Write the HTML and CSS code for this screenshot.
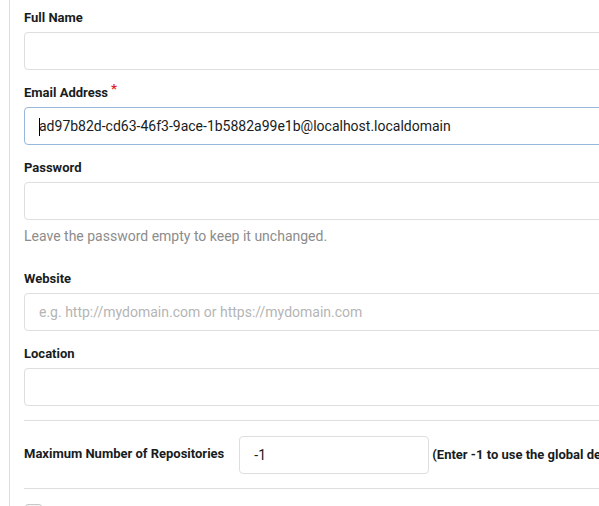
FILE: index.html
```html
<!DOCTYPE html>
<html>
<head>
<meta charset="utf-8">
<link rel="stylesheet" href="styles.css">
</head>
<body>
<div class="panel">
  <form class="form">
    <div class="field">
      <label class="label">Full Name</label>
      <div class="input"></div>
    </div>
    <div class="field">
      <label class="label">Email Address<span class="req">*</span></label>
      <div class="input focus"><span class="caret"></span>ad97b82d-cd63-46f3-9ace-1b5882a99e1b@localhost.localdomain</div>
    </div>
    <div class="field field-help">
      <label class="label">Password</label>
      <div class="input"></div>
      <div class="help">Leave the password empty to keep it unchanged.</div>
    </div>
    <div class="field">
      <label class="label">Website</label>
      <div class="input placeholder">e.g. http://mydomain.com or https://mydomain.com</div>
    </div>
    <div class="field">
      <label class="label">Location</label>
      <div class="input"></div>
    </div>
    <div class="divider"></div>
    <div class="inline-field">
      <label class="label inline-label">Maximum Number of Repositories</label>
      <div class="input small">-1</div>
      <span class="note">(Enter -1 to use the global default limit.)</span>
    </div>
    <div class="divider"></div>
    <div class="check-row">
      <span class="checkbox"></span>
    </div>
  </form>
</div>
</body>
</html>
```
FILE: styles.css
```css
html, body {
  margin: 0;
  padding: 0;
  background: #fff;
  overflow: hidden;
  width: 599px;
  height: 506px;
}
body {
  font-family: Roboto, "Liberation Sans", sans-serif;
  color: #181c21;
}
.panel {
  margin-left: 9px;
  border-left: 1px solid #dedede;
  width: 900px;
  min-height: 506px;
  padding: 9px 0 0 14px;
  box-sizing: border-box;
}
.form {
  width: 760px;
}
.field {
  margin-bottom: 14px;
}
.label {
  display: block;
  font-size: 13px;
  font-weight: 700;
  line-height: 18px;
  margin-bottom: 5px;
  color: #181c21;
}
.req {
  color: #db2828;
  margin-left: 3px;
  position: relative;
  top: -4px;
  font-size: 13px;
}
.input {
  position: relative;
  box-sizing: border-box;
  height: 38px;
  border: 1px solid #dedede;
  border-radius: 4px;
  padding: 0 14px;
  font-size: 14px;
  line-height: 36px;
  color: #181c21;
  white-space: nowrap;
  overflow: hidden;
}
.input.focus {
  border-color: #96b8dc;
}
.caret {
  position: absolute;
  left: 14px;
  top: 10px;
  width: 1px;
  height: 18px;
  background: #000;
}
.placeholder {
  color: #b5b5b5;
}
.field-help {
  margin-bottom: 24px;
}
.help {
  margin-top: 6px;
  font-size: 14px;
  line-height: 20px;
  color: #8c8c8c;
}
.divider {
  height: 1px;
  background: #dedede;
  margin: 0 0 15px 0;
}
.inline-field {
  display: flex;
  align-items: center;
  margin-bottom: 14px;
}
.inline-label {
  margin: 0 15px 3px 0;
}
.input.small {
  width: 190px;
  flex: none;
}
.note {
  font-size: 13px;
  font-weight: 700;
  margin-left: 3px;
  margin-bottom: 2px;
  white-space: nowrap;
}
.check-row {
  height: 20px;
}
.checkbox {
  display: block;
  width: 15px;
  height: 15px;
  margin-left: 1px;
  border: 1px solid #c8c8c8;
  border-radius: 3px;
  background: #f3f3f3;
}
```
